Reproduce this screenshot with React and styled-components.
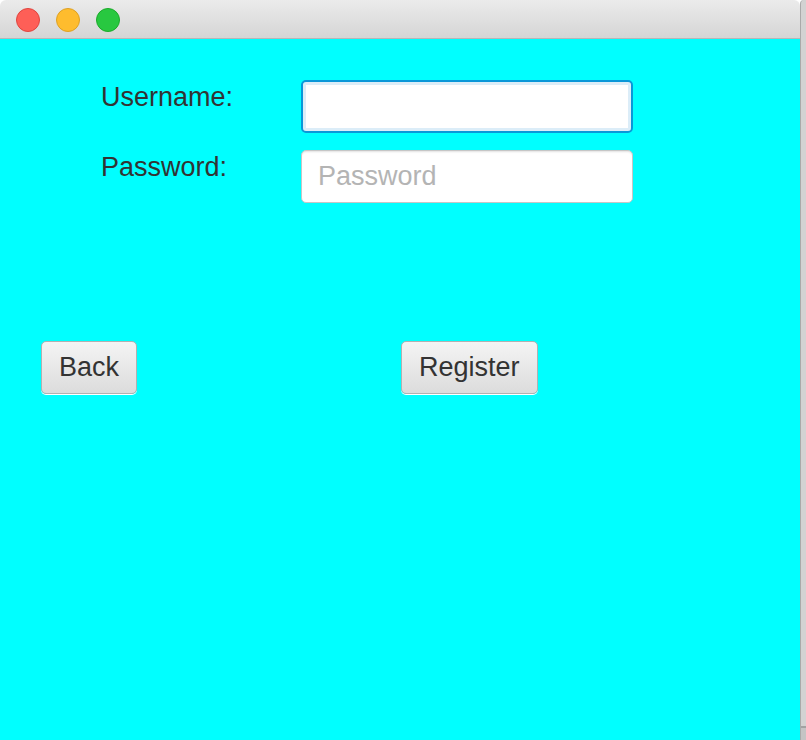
import React from 'react';
import styled, { createGlobalStyle } from 'styled-components';

const GlobalStyle = createGlobalStyle`
  html, body {
    margin: 0;
    padding: 0;
    height: 100%;
    overflow: hidden;
  }
  body {
    font-family: "Liberation Sans", Arial, sans-serif;
  }
  #root {
    height: 100%;
  }
`;

const Screen = styled.div`
  display: flex;
  width: 806px;
  height: 740px;
`;

const Window = styled.div`
  display: flex;
  flex-direction: column;
  width: 800px;
  height: 100%;
`;

const SideStrip = styled.div`
  flex: 1;
  display: flex;
  flex-direction: column;
  justify-content: flex-end;
  background: #d2d2d2;
  border-left: 1px solid #a9a9a9;
  border-top-left-radius: 4px;
`;

const StripEdge = styled.div`
  height: 12px;
  border-top: 2px solid #a2a2a2;
  background: #c4c4c4;
`;

const TitleBar = styled.div`
  box-sizing: border-box;
  height: 39px;
  display: flex;
  align-items: center;
  gap: 16px;
  padding-left: 16px;
  padding-top: 1px;
  background: linear-gradient(#ebebeb, #d5d5d5);
  border-bottom: 1px solid #b6b6b6;
  border-top-left-radius: 6px;
  border-top-right-radius: 6px;
`;

const Light = styled.span`
  box-sizing: border-box;
  width: 24px;
  height: 24px;
  border-radius: 50%;
  background: ${(p) => p.color};
  border: 1px solid ${(p) => p.edge};
`;

const Content = styled.div`
  flex: 1;
  background: #00ffff;
  padding-top: 41px;
`;

const Form = styled.div`
  display: grid;
  grid-template-columns: 200px 332px;
  row-gap: 17px;
  padding-left: 101px;
`;

const Label = styled.label`
  align-self: start;
  padding-top: 2px;
  font-size: 27px;
  line-height: 30px;
  color: #333333;
`;

const Field = styled.input`
  box-sizing: border-box;
  width: 332px;
  height: 53px;
  padding: 0 16px;
  font-family: "Liberation Sans", Arial, sans-serif;
  font-size: 27px;
  color: #333333;
  background: #ffffff;
  border-radius: 5px;
  outline: none;
  border: ${(p) => (p.$focused ? '2px solid #0a97d8' : '1px solid #c6c6c6')};
  box-shadow: ${(p) =>
    p.$focused
      ? 'inset 0 0 0 3px #dcedf8'
      : 'inset 0 2px 2px -1px rgba(0, 0, 0, 0.12)'};
  &::placeholder {
    color: #b4b4b4;
  }
`;

const ButtonRow = styled.div`
  display: grid;
  grid-template-columns: 360px auto;
  justify-content: start;
  justify-items: start;
  padding-left: 41px;
  margin-top: 138px;
`;

const Button = styled.button`
  box-sizing: border-box;
  height: 53px;
  padding: 0 17px;
  font-family: "Liberation Sans", Arial, sans-serif;
  font-size: 27px;
  line-height: 1;
  color: #333333;
  background: linear-gradient(#f4f4f4, #dcdcdc);
  border: 1px solid #b1b1b1;
  border-radius: 5px;
  box-shadow: 0 1px 0 #ffffff;
  cursor: pointer;
`;

const App = () => (
  <>
    <GlobalStyle />
    <Screen>
      <Window>
        <TitleBar>
          <Light color="#fe5f57" edge="#e0443e" />
          <Light color="#febc2e" edge="#dea123" />
          <Light color="#28c840" edge="#1aab29" />
        </TitleBar>
        <Content>
          <Form>
            <Label htmlFor="username">Username:</Label>
            <Field id="username" type="text" $focused />
            <Label htmlFor="password">Password:</Label>
            <Field id="password" type="password" placeholder="Password" />
          </Form>
          <ButtonRow>
            <Button>Back</Button>
            <Button>Register</Button>
          </ButtonRow>
        </Content>
      </Window>
      <SideStrip>
        <StripEdge />
      </SideStrip>
    </Screen>
  </>
);

export default App;
